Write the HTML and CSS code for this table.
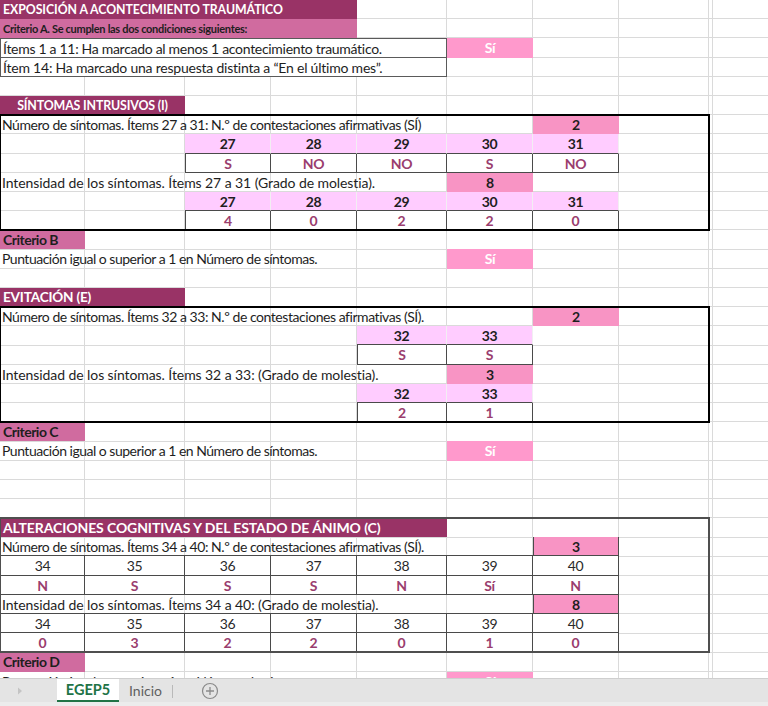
FILE: index.html
```html
<!DOCTYPE html>
<html lang="es">
<head>
<meta charset="utf-8">
<title>EGEP5</title>
<link rel="stylesheet" href="styles.css">
</head>
<body>
<div class="viewport">
  <div class="wrap">
    <div class="sheet">
      <!-- R0 -->
      <div class="c s4 title">EXPOSICIÓN A ACONTECIMIENTO TRAUMÁTICO</div><div class="c s6"></div>
      <!-- R1 -->
      <div class="c s4 crit small">Criterio A. Se cumplen las dos condiciones siguientes:</div><div class="c s6"></div>
      <!-- R2 -->
      <div class="c s5 txt cbox cbox-top">Ítems 1 a 11: Ha marcado al menos 1 acontecimiento traumático.</div><div class="c si">Sí</div><div class="c s4"></div>
      <!-- R3 -->
      <div class="c s5 txt cbox item14">Ítem 14: Ha marcado una respuesta distinta a “En el último mes”.</div><div class="c s5"></div>
      <!-- R4 -->
      <div class="c s10"></div>
      <!-- R5 -->
      <div class="c s2 hdr center">SÍNTOMAS INTRUSIVOS (I)</div><div class="c s8"></div>
      <!-- R6 -->
      <div class="c s6 txt num">Número de síntomas. Ítems 27 a 31: N.º de contestaciones afirmativas (SÍ)</div><div class="c cnt">2</div><div class="c s3"></div>
      <!-- R7 -->
      <div class="c s2"></div><div class="c ph">27</div><div class="c ph">28</div><div class="c ph">29</div><div class="c ph">30</div><div class="c ph">31</div><div class="c s3"></div>
      <!-- R8 -->
      <div class="c s2"></div><div class="c v bd bl">S</div><div class="c v bd">NO</div><div class="c v bd">NO</div><div class="c v bd">S</div><div class="c v bd">NO</div><div class="c s3"></div>
      <!-- R9 -->
      <div class="c s5 txt int">Intensidad de los síntomas. Ítems 27 a 31 (Grado de molestia).</div><div class="c cnt">8</div><div class="c s4"></div>
      <!-- R10 -->
      <div class="c s2"></div><div class="c ph">27</div><div class="c ph">28</div><div class="c ph">29</div><div class="c ph">30</div><div class="c ph">31</div><div class="c s3"></div>
      <!-- R11 -->
      <div class="c s2"></div><div class="c v bd bl">4</div><div class="c v bd">0</div><div class="c v bd">2</div><div class="c v bd">2</div><div class="c v bd">0</div><div class="c s3"></div>
      <!-- R12 -->
      <div class="c crit">Criterio B</div><div class="c s9"></div>
      <!-- R13 -->
      <div class="c s5 txt tight">Puntuación igual o superior a 1 en Número de síntomas.</div><div class="c si">Sí</div><div class="c s4"></div>
      <!-- R14 -->
      <div class="c s10"></div>
      <!-- R15 -->
      <div class="c s2 hdr evit">EVITACIÓN (E)</div><div class="c s8"></div>
      <!-- R16 -->
      <div class="c s6 txt num">Número de síntomas. Ítems 32 a 33: N.º de contestaciones afirmativas (SÍ).</div><div class="c cnt">2</div><div class="c s3"></div>
      <!-- R17 -->
      <div class="c s4"></div><div class="c ph">32</div><div class="c ph">33</div><div class="c s4"></div>
      <!-- R18 -->
      <div class="c s4"></div><div class="c v bd bl">S</div><div class="c v bd">S</div><div class="c s4"></div>
      <!-- R19 -->
      <div class="c s5 txt int">Intensidad de los síntomas. Ítems 32 a 33: (Grado de molestia).</div><div class="c cnt">3</div><div class="c s4"></div>
      <!-- R20 -->
      <div class="c s4"></div><div class="c ph">32</div><div class="c ph">33</div><div class="c s4"></div>
      <!-- R21 -->
      <div class="c s4"></div><div class="c v bd bl">2</div><div class="c v bd">1</div><div class="c s4"></div>
      <!-- R22 -->
      <div class="c crit">Criterio C</div><div class="c s9"></div>
      <!-- R23 -->
      <div class="c s5 txt tight">Puntuación igual o superior a 1 en Número de síntomas.</div><div class="c si">Sí</div><div class="c s4"></div>
      <!-- R24-26 -->
      <div class="c s10"></div>
      <div class="c s10"></div>
      <div class="c s10"></div>
      <!-- R27 -->
      <div class="c s5 hdr big">ALTERACIONES COGNITIVAS Y DEL ESTADO DE ÁNIMO (C)</div><div class="c s5"></div>
      <!-- R28 -->
      <div class="c s6 txt num bb">Número de síntomas. Ítems 34 a 40: N.º de contestaciones afirmativas (SÍ).</div><div class="c cnt bd bl">3</div><div class="c s3"></div>
      <!-- R29 -->
      <div class="c n bd bl">34</div><div class="c n bd">35</div><div class="c n bd">36</div><div class="c n bd">37</div><div class="c n bd">38</div><div class="c n bd">39</div><div class="c n bd">40</div><div class="c s3"></div>
      <!-- R30 -->
      <div class="c v bd bl">N</div><div class="c v bd">S</div><div class="c v bd">S</div><div class="c v bd">S</div><div class="c v bd">N</div><div class="c v bd">Sí</div><div class="c v bd">N</div><div class="c s3"></div>
      <!-- R31 -->
      <div class="c s6 txt int bb">Intensidad de los síntomas. Ítems 34 a 40: (Grado de molestia).</div><div class="c cnt bd bl">8</div><div class="c s3"></div>
      <!-- R32 -->
      <div class="c n bd bl">34</div><div class="c n bd">35</div><div class="c n bd">36</div><div class="c n bd">37</div><div class="c n bd">38</div><div class="c n bd">39</div><div class="c n bd">40</div><div class="c s3"></div>
      <!-- R33 -->
      <div class="c v bd bl">0</div><div class="c v bd">3</div><div class="c v bd">2</div><div class="c v bd">2</div><div class="c v bd">0</div><div class="c v bd">1</div><div class="c v bd">0</div><div class="c s3"></div>
      <!-- R34 -->
      <div class="c crit">Criterio D</div><div class="c s9"></div>
      <!-- R35 -->
      <div class="c s5 txt tight">Puntuación igual o superior a 1 en Número de síntomas.</div><div class="c si">Sí</div><div class="c s4"></div>
    </div>
    <div class="frames">
      <div class="frame f1"></div>
      <div class="frame f2"></div>
      <div class="frame f3"></div>
    </div>
  </div>
</div>
<div class="tabbar">
  <span class="nav">
    <svg width="6" height="8" viewBox="0 0 6 8"><path d="M1 0.5 L5 4 L1 7.5 Z" fill="#c4c4c4"/></svg>
  </span>
  <span class="tab active">EGEP5</span>
  <span class="tab">Inicio</span>
  <span class="sep"></span>
  <span class="add">
    <svg width="18" height="18" viewBox="0 0 18 18"><circle cx="9" cy="9" r="7.5" fill="none" stroke="#8a8a8a" stroke-width="1.2"/><path d="M9 5 V13 M5 9 H13" stroke="#8a8a8a" stroke-width="1.3"/></svg>
  </span>
</div>
</body>
</html>
```
FILE: styles.css
```css
html, body {
  margin: 0;
  padding: 0;
  background: #fff;
}
body {
  width: 768px;
  height: 706px;
  overflow: hidden;
  font-family: Lato, "Open Sans", "Liberation Sans", sans-serif;
  font-size: 14px;
  color: #1e1e1e;
}
.viewport {
  height: 678px;
  overflow: hidden;
}
.wrap {
  display: grid;
}
.sheet, .frames {
  grid-area: 1 / 1;
  display: grid;
  grid-template-columns: 85px 100px 86px 86px 90px 86px 86px 90px 4px 55px;
  grid-auto-rows: 19.2px;
}
.sheet {
  background-color: #fff;
  background-image:
    linear-gradient(#dadada, #dadada),
    linear-gradient(#dadada, #dadada),
    linear-gradient(#dadada, #dadada),
    linear-gradient(#dadada, #dadada),
    linear-gradient(#dadada, #dadada),
    linear-gradient(#dadada, #dadada),
    linear-gradient(#dadada, #dadada),
    linear-gradient(#dadada, #dadada),
    linear-gradient(#dadada, #dadada),
    repeating-linear-gradient(to bottom, transparent 0 18.2px, #dadada 18.2px 19.2px);
  background-size: 1px 100%, 1px 100%, 1px 100%, 1px 100%, 1px 100%, 1px 100%, 1px 100%, 1px 100%, 1px 100%, 100% 100%;
  background-position: 84px 0, 184px 0, 270px 0, 356px 0, 446px 0, 532px 0, 618px 0, 708px 0, 712px 0, 0 0;
  background-repeat: no-repeat;
}
.c {
  box-sizing: border-box;
  white-space: nowrap;
  line-height: 19px;
  min-width: 0;
  letter-spacing: -0.3px;
}
.s2 { grid-column: span 2; }
.s3 { grid-column: span 3; }
.s4 { grid-column: span 4; }
.s5 { grid-column: span 5; }
.s6 { grid-column: span 6; }
.s8 { grid-column: span 8; }
.s9 { grid-column: span 9; }
.s10 { grid-column: span 10; }

.title {
  background: #993366;
  color: #fff;
  font-weight: 700;
  font-size: 12.3px;
  letter-spacing: -0.05px;
  padding-left: 3px;
}
.hdr {
  background: #993366;
  color: #fff;
  font-weight: 700;
  font-size: 14px;
  padding-left: 3px;
}
.hdr.center {
  text-align: center;
  padding-left: 0;
  font-size: 12.4px;
  letter-spacing: -0.15px;
}
.hdr.evit {
  font-size: 13.6px;
  letter-spacing: -0.2px;
}
.hdr.big {
  font-size: 14px;
  letter-spacing: -0.1px;
}
.crit {
  background: #d06b9f;
  color: #1e1e1e;
  font-weight: 700;
  padding-left: 3px;
  letter-spacing: -0.5px;
}
.crit.small {
  font-size: 11px;
  letter-spacing: -0.3px;
}
.txt {
  padding-left: 2px;
  overflow: visible;
}
.txt.num {
  letter-spacing: -0.45px;
}
.txt.int {
  letter-spacing: -0.08px;
}
.txt.item14 {
  letter-spacing: -0.22px;
}
.txt.tight {
  letter-spacing: -0.5px;
}
.cbox {
  background: #fff;
  border-left: 1px solid #5a5a5a;
  border-right: 1px solid #5a5a5a;
  border-bottom: 1px solid #5a5a5a;
}
.cbox-top {
  border-top: 1px solid #5a5a5a;
}
.si {
  background: #ff99cc;
  color: #fff;
  font-weight: 700;
  text-align: center;
}
.cnt {
  background: #f894c4;
  color: #1e1e1e;
  font-weight: 700;
  text-align: center;
}
.ph {
  background: #ffccff;
  color: #1e1e1e;
  font-weight: 700;
  text-align: center;
  border-right: 1px solid #f2eef2;
  border-bottom: 1px solid #4a4a4a;
}
.v {
  background: #fff;
  color: #9a3d6e;
  font-weight: 700;
  text-align: center;
}
.n {
  background: #fff;
  color: #2a2a2a;
  text-align: center;
}
.bd {
  border-right: 1px solid #4a4a4a;
  border-bottom: 1px solid #4a4a4a;
}
.bl {
  border-left: 1px solid #4a4a4a;
}
.bb {
  border-bottom: 1px solid #4a4a4a;
}

.frames {
  pointer-events: none;
}
.frame {
  grid-column: 1 / span 8;
  margin: -1px;
  border: 2px solid #000;
}
.f1 { grid-row: 7 / span 6; }
.f2 { grid-row: 17 / span 6; }
.f3 { grid-row: 28 / span 7; border-color: #4f4f4f; }

.tabbar {
  box-sizing: border-box;
  height: 28px;
  background: #e4e4e4;
  border-top: 1px solid #cfcfcf;
  border-bottom: 4px solid #ececec;
  display: flex;
  align-items: stretch;
  font-family: Lato, "Open Sans", sans-serif;
}
.nav {
  width: 57px;
  display: flex;
  align-items: center;
  padding-left: 17px;
  box-sizing: border-box;
}
.tab {
  display: flex;
  align-items: center;
  font-size: 14px;
  line-height: 16px;
  color: #5f5f5f;
  padding: 0 10px;
}
.tab.active {
  width: 62px;
  box-sizing: border-box;
  justify-content: center;
  background: #fff;
  color: #217346;
  font-weight: 700;
  font-size: 14.5px;
  border-bottom: 2px solid #217346;
  padding: 0;
}
.sep {
  width: 1px;
  background: #b9b9b9;
  margin: 6px 0 4px 0;
}
.add {
  display: flex;
  align-items: center;
  margin-left: 28px;
}
```
